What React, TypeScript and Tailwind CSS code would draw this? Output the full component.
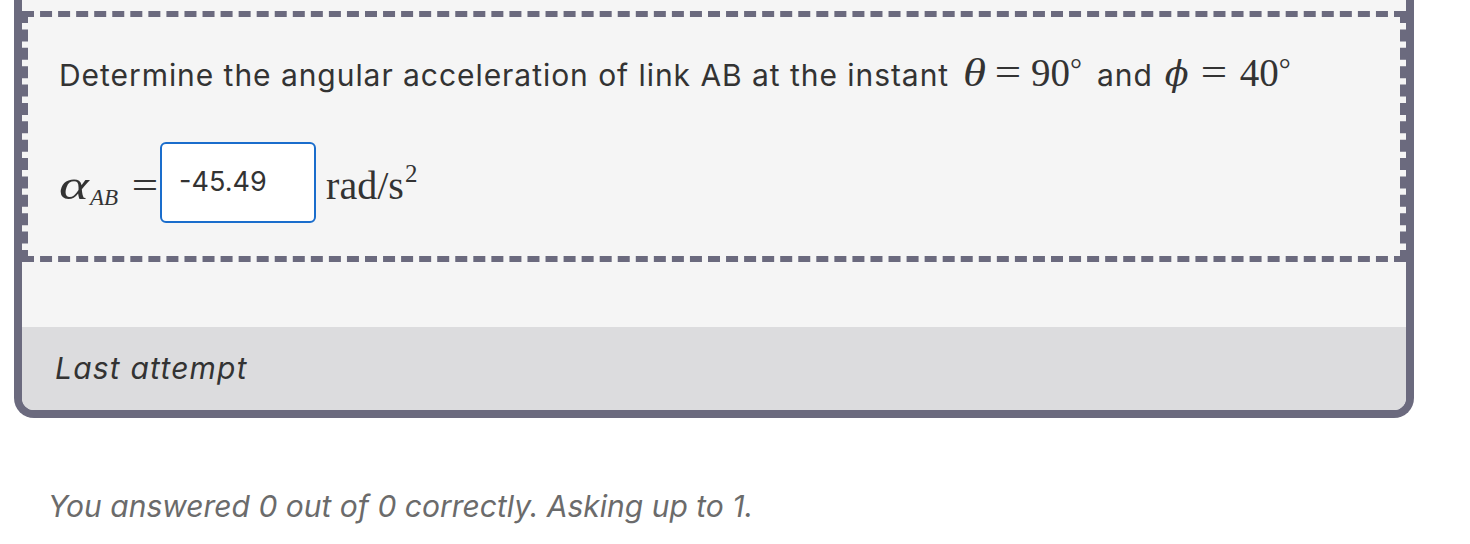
import React from "react";

const serif = "font-['Liberation_Serif',serif]";

export default function App() {
  return (
    <div className="w-[1470px] h-[544px] bg-white overflow-hidden text-[#333333] font-['Inter',sans-serif]">
      <div className="ml-[14px] w-[1400px] border-x-8 border-b-8 border-[#6b6a7e] rounded-b-[20px] bg-[#f5f5f5] overflow-hidden pt-[11px]">
        <div className="border-[6px] border-dashed border-[#6b6a7e] h-[251px] pl-[31px] pt-[34px]">
          <div className="flex items-baseline h-[44px] leading-[44px] whitespace-nowrap">
            <span className="text-[30px] tracking-[0.95px]">Determine the angular acceleration of link AB at the instant</span>
            <span className={`ml-[9px] w-[32px] inline-flex justify-center ${serif} text-[39px] italic`}>
              <span className="inline-block scale-x-[1.2]">θ</span>
            </span>
            <span className={`ml-[6px] w-[24px] inline-flex justify-center ${serif} text-[39px]`}>
              <span className="inline-block scale-x-[1.2]">=</span>
            </span>
            <span className={`ml-[11px] ${serif} text-[39px]`}>90</span>
            <span className={`${serif} text-[30px] inline-block -translate-y-[7px]`}>°</span>
            <span className="ml-[15px] text-[30px] tracking-[0.9px]">and</span>
            <span className="ml-[10px] w-[28px] inline-flex justify-center font-['DejaVu_Serif',serif] text-[35px] italic">ϕ</span>
            <span className={`ml-[11px] w-[24px] inline-flex justify-center ${serif} text-[39px]`}>
              <span className="inline-block scale-x-[1.2]">=</span>
            </span>
            <span className={`ml-[14px] ${serif} text-[39px]`}>40</span>
            <span className={`${serif} text-[30px] inline-block -translate-y-[7px]`}>°</span>
          </div>
          <div className="flex items-center mt-[47px] h-[81px]">
            <div className={`flex items-baseline ${serif} leading-none translate-y-[2px]`}>
              <span className="inline-block w-[31px] text-[43px] italic">
                <span className="inline-block scale-x-[1.32] origin-left">α</span>
              </span>
              <span className="text-[23px] italic inline-block translate-y-[6px]">AB</span>
              <span className="ml-[15px] w-[24px] inline-flex justify-center text-[39px]">
                <span className="inline-block scale-x-[1.2]">=</span>
              </span>
            </div>
            <div className="ml-[3px] w-[156px] h-[81px] bg-white border-2 border-[#1a6dcc] rounded-[6px] flex items-center pl-[17px] text-[27px] text-[#333333] shrink-0">
              -45.49
            </div>
            <div className={`ml-[10px] flex items-start ${serif} leading-none translate-y-[3px]`}>
              <span className="text-[40px]">rad/s</span>
              <span className="text-[25px] ml-[1px] -mt-[5px]">2</span>
            </div>
          </div>
        </div>
        <div className="h-[65px]" />
        <div className="bg-[#dcdcde] h-[83px] pl-[33px] flex items-center italic text-[30px] tracking-[1.2px] text-[#333333]">
          Last attempt
        </div>
      </div>
      <p className="ml-[48px] mt-[66px] italic text-[30px] text-[#6b6b6b] whitespace-nowrap">
        You answered 0 out of 0 correctly. Asking up to 1.
      </p>
    </div>
  );
}
